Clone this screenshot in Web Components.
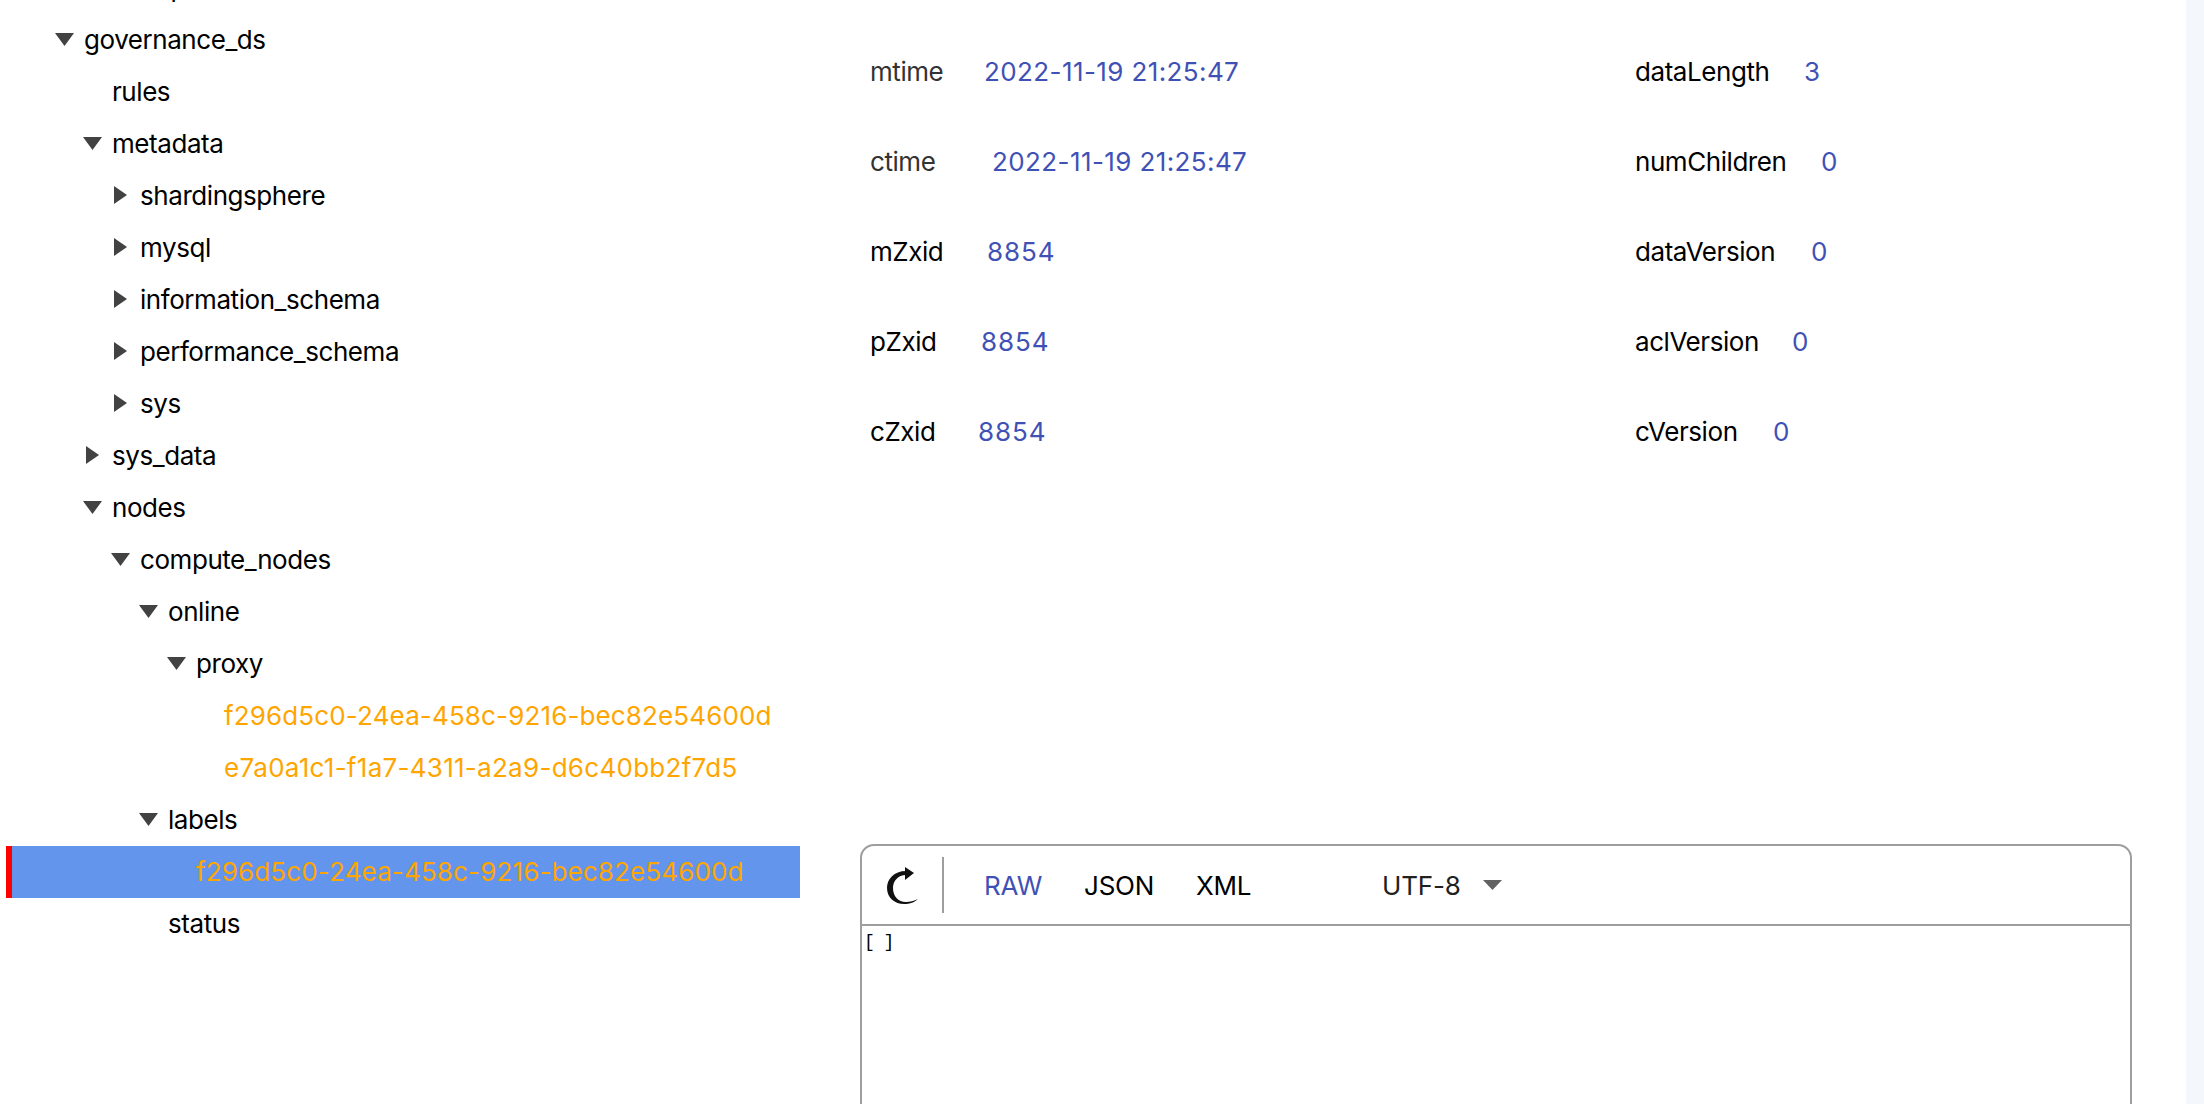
<!DOCTYPE html>
<html>
<head>
<meta charset="utf-8">
<title>governance_ds</title>
<style>
  html, body { margin: 0; height: 100%; overflow: hidden; background: #ffffff; }
  body { font-family: Inter, "Liberation Sans", sans-serif; font-size: 26px; color: #000000; }
</style>
</head>
<body>
<zk-app>
  <zk-tree slot="tree">
    <zk-node level="0">zookeeper</zk-node>
    <zk-node level="0" state="open">governance_ds</zk-node>
    <zk-node level="1">rules</zk-node>
    <zk-node level="1" state="open">metadata</zk-node>
    <zk-node level="2" state="closed">shardingsphere</zk-node>
    <zk-node level="2" state="closed">mysql</zk-node>
    <zk-node level="2" state="closed">information_schema</zk-node>
    <zk-node level="2" state="closed">performance_schema</zk-node>
    <zk-node level="2" state="closed">sys</zk-node>
    <zk-node level="1" state="closed">sys_data</zk-node>
    <zk-node level="1" state="open">nodes</zk-node>
    <zk-node level="2" state="open">compute_nodes</zk-node>
    <zk-node level="3" state="open">online</zk-node>
    <zk-node level="4" state="open">proxy</zk-node>
    <zk-node level="5" ephemeral style="letter-spacing:.14px">f296d5c0-24ea-458c-9216-bec82e54600d</zk-node>
    <zk-node level="5" ephemeral style="letter-spacing:.28px">e7a0a1c1-f1a7-4311-a2a9-d6c40bb2f7d5</zk-node>
    <zk-node level="3" state="open">labels</zk-node>
    <zk-node level="4" ephemeral selected style="letter-spacing:.14px">f296d5c0-24ea-458c-9216-bec82e54600d</zk-node>
    <zk-node level="3">status</zk-node>
  </zk-tree>
  <zk-stats slot="stats">
    <zk-stat label="mtime" at="114" soft style="--value-spacing:.4px">2022-11-19 21:25:47</zk-stat>
    <zk-stat label="dataLength" at="169">3</zk-stat>
    <zk-stat label="ctime" at="122" soft style="--value-spacing:.4px">2022-11-19 21:25:47</zk-stat>
    <zk-stat label="numChildren" at="186">0</zk-stat>
    <zk-stat label="mZxid" at="117">8854</zk-stat>
    <zk-stat label="dataVersion" at="176">0</zk-stat>
    <zk-stat label="pZxid" at="111">8854</zk-stat>
    <zk-stat label="aclVersion" at="157">0</zk-stat>
    <zk-stat label="cZxid" at="108">8854</zk-stat>
    <zk-stat label="cVersion" at="138">0</zk-stat>
  </zk-stats>
  <zk-data slot="data">[ ]</zk-data>
</zk-app>
<script>
// Tree row: indent comes from the level attribute, 28px per level
const nodeTemplate = document.createElement("template");
nodeTemplate.innerHTML = `
<style>
  :host {
    display: flex;
    align-items: center;
    height: 52px;
    padding-bottom: 2px;
    box-sizing: border-box;
    border-left: 6px solid transparent;
    white-space: nowrap;
    letter-spacing: -0.44px;
  }
  :host([selected]) { background: #6495ed; border-left-color: #ff0000; }
  :host([ephemeral]) { color: #ffa500; }
  .arrow { width: 29px; margin-left: -29px; display: flex; flex: none; }
  .arrow svg { display: none; fill: #424242; }
  :host([state="open"]) .open, :host([state="closed"]) .closed { display: block; }
  .closed { margin-left: 3px; }
</style>
<span class="arrow">
  <svg class="open" width="19" height="13" viewBox="0 0 19 13"><path d="M0 0h19L9.5 13z"/></svg>
  <svg class="closed" width="13" height="18" viewBox="0 0 13 18"><path d="M0 0l13 9L0 18z"/></svg>
</span>
<slot></slot>`;
class ZkNode extends HTMLElement {
    constructor() {
        super();
        this.attachShadow({ mode: "open" }).appendChild(nodeTemplate.content.cloneNode(true));
    }
    connectedCallback() {
        const level = Number(this.getAttribute("level") || 0);
        this.style.paddingLeft = 72 + level * 28 + "px";
    }
}
const treeTemplate = document.createElement("template");
treeTemplate.innerHTML = `
<style>
  :host { display: block; width: 794px; margin: -38px 0 0 6px; flex: none; }
</style>
<slot></slot>`;
class ZkTree extends HTMLElement {
    constructor() {
        super();
        this.attachShadow({ mode: "open" }).appendChild(treeTemplate.content.cloneNode(true));
    }
}
// One key/value pair, "at" is where the value starts relative to the key
const statTemplate = document.createElement("template");
statTemplate.innerHTML = `
<style>
  :host { display: flex; align-items: center; height: 90px; letter-spacing: -0.44px; }
  .key { flex: none; }
  :host([soft]) .key { color: #333333; }
  .value { color: #3f51b5; letter-spacing: var(--value-spacing, .9px); }
</style>
<span class="key"></span><span class="value"><slot></slot></span>`;
class ZkStat extends HTMLElement {
    constructor() {
        super();
        this.attachShadow({ mode: "open" }).appendChild(statTemplate.content.cloneNode(true));
    }
    connectedCallback() {
        const key = this.shadowRoot.querySelector(".key");
        key.textContent = this.getAttribute("label");
        key.style.width = this.getAttribute("at") + "px";
    }
}
const statsTemplate = document.createElement("template");
statsTemplate.innerHTML = `
<style>
  :host {
    display: grid;
    grid-template-columns: 765px 1fr;
    grid-auto-rows: 90px;
    padding: 26px 0 0 10px;
  }
</style>
<slot></slot>`;
class ZkStats extends HTMLElement {
    constructor() {
        super();
        this.attachShadow({ mode: "open" }).appendChild(statsTemplate.content.cloneNode(true));
    }
}
// Data panel with its toolbar, the viewer text goes into the slot
const dataTemplate = document.createElement("template");
dataTemplate.innerHTML = `
<style>
  :host {
    display: block;
    height: 400px;
    margin-top: 368px;
    box-sizing: border-box;
    border: 2px solid #9e9e9e;
    border-radius: 14px 14px 0 0;
    letter-spacing: -0.2px;
  }
  .bar {
    display: flex;
    align-items: center;
    height: 80px;
    box-sizing: border-box;
    border-bottom: 2px solid #9e9e9e;
  }
  .refresh { flex: none; width: 82px; height: 56px; margin-right: 40px; border-right: 2px solid #9e9e9e; box-sizing: border-box; display: flex; align-items: center; }
  .refresh svg { margin-left: 19px; }
  .tab { flex: none; }
  .active { color: #3f51b5; }
  .charset { color: #212121; display: flex; align-items: center; }
  .charset svg { margin-left: 22px; }
  pre { margin: 0; padding: 4px 2px; font: 18px/24px "Liberation Mono", monospace; letter-spacing: -1px; }
</style>
<div class="bar">
  <span class="refresh">
    <svg width="40" height="50" viewBox="0 0 40 50"><path d="M25 11C13 11 6 19 6 28c0 10 8 16 17 16 6 0 11-2 14-5-4 2-8 3-12 3-8 0-13-6-13-14 0-7 5-13 13-13z" fill="#111"/><path d="M24 7l9 6-9 7z" fill="#111"/></svg>
  </span>
  <span class="tab active" style="width:100px">RAW</span><span class="tab" style="width:112px">JSON</span><span class="tab" style="width:186px">XML</span>
  <span class="charset">UTF-8<svg width="19" height="10" viewBox="0 0 19 10"><path d="M0 0h19L9.5 10z" fill="#616161"/></svg></span>
</div>
<pre><slot></slot></pre>`;
class ZkData extends HTMLElement {
    constructor() {
        super();
        this.attachShadow({ mode: "open" }).appendChild(dataTemplate.content.cloneNode(true));
    }
}
const appTemplate = document.createElement("template");
appTemplate.innerHTML = `
<style>
  :host { display: flex; height: 1104px; overflow: hidden; }
  .detail { width: 1272px; margin-left: 60px; flex: none; }
  .rail { flex: 1; background: #f4f7fb; margin-left: 54px; }
</style>
<slot name="tree"></slot>
<div class="detail"><slot name="stats"></slot><slot name="data"></slot></div>
<div class="rail"></div>`;
class ZkApp extends HTMLElement {
    constructor() {
        super();
        this.attachShadow({ mode: "open" }).appendChild(appTemplate.content.cloneNode(true));
    }
}
customElements.define("zk-node", ZkNode);
customElements.define("zk-tree", ZkTree);
customElements.define("zk-stat", ZkStat);
customElements.define("zk-stats", ZkStats);
customElements.define("zk-data", ZkData);
customElements.define("zk-app", ZkApp);
</script>
</body>
</html>
